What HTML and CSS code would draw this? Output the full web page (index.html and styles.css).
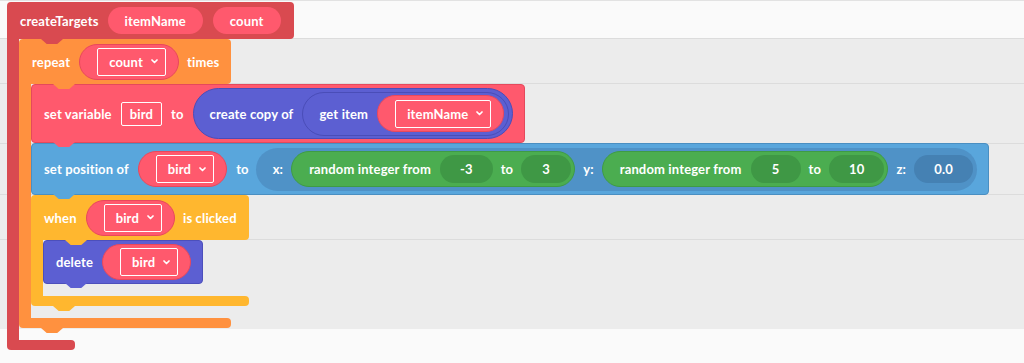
FILE: index.html
```html
<!DOCTYPE html>
<html lang="en">
<head>
<meta charset="utf-8" />
<meta name="viewport" content="width=device-width,initial-scale=1" />
<title>createTargets</title>
<link rel="stylesheet" href="styles.css">
</head>
<body>
<div class="workspace">

  <!-- function definition -->
  <div class="block c-block fn">
    <div class="c-head">
      <span class="label">createTargets</span>
      <span class="param">itemName</span>
      <span class="param">count</span>
    </div>
    <div class="c-mouth">
      <div class="c-arm"></div>
      <div class="c-stack">

        <!-- repeat -->
        <div class="block c-block repeat">
          <div class="c-head">
            <span class="label">repeat</span>
            <span class="dropdown"><span class="field">count<svg class="chev" width="7" height="5" viewBox="0 0 7 5"><path d="M1 1l2.5 2.5L6 1"/></svg></span></span>
            <span class="label">times</span>
          </div>
          <div class="c-mouth">
            <div class="c-arm"></div>
            <div class="c-stack">

              <div class="block stmt set-var">
                <span class="label">set variable</span>
                <span class="var-field">bird</span>
                <span class="label">to</span>
                <span class="reporter copy">
                  <span class="label">create copy of</span>
                  <span class="reporter get-item">
                    <span class="label">get item</span>
                    <span class="dropdown"><span class="field">itemName<svg class="chev" width="7" height="5" viewBox="0 0 7 5"><path d="M1 1l2.5 2.5L6 1"/></svg></span></span>
                  </span>
                </span>
              </div>

              <div class="block stmt set-pos">
                <span class="label">set position of</span>
                <span class="dropdown"><span class="field">bird<svg class="chev" width="7" height="5" viewBox="0 0 7 5"><path d="M1 1l2.5 2.5L6 1"/></svg></span></span>
                <span class="label">to</span>
                <span class="reporter vec">
                  <span class="label">x:</span>
                  <span class="reporter rand">
                    <span class="label">random integer from</span>
                    <span class="num">-3</span>
                    <span class="label">to</span>
                    <span class="num">3</span>
                  </span>
                  <span class="label">y:</span>
                  <span class="reporter rand">
                    <span class="label">random integer from</span>
                    <span class="num">5</span>
                    <span class="label">to</span>
                    <span class="num">10</span>
                  </span>
                  <span class="label">z:</span>
                  <span class="num num-blue">0.0</span>
                </span>
              </div>

              <!-- when clicked -->
              <div class="block c-block when">
                <div class="c-head">
                  <span class="label">when</span>
                  <span class="dropdown"><span class="field">bird<svg class="chev" width="7" height="5" viewBox="0 0 7 5"><path d="M1 1l2.5 2.5L6 1"/></svg></span></span>
                  <span class="label">is clicked</span>
                </div>
                <div class="c-mouth">
                  <div class="c-arm"></div>
                  <div class="c-stack">
                    <div class="block stmt delete">
                      <span class="label">delete</span>
                      <span class="dropdown"><span class="field">bird<svg class="chev" width="7" height="5" viewBox="0 0 7 5"><path d="M1 1l2.5 2.5L6 1"/></svg></span></span>
                    </div>
                  </div>
                </div>
                <div class="c-foot"></div>
              </div>

            </div>
          </div>
          <div class="c-foot"></div>
        </div>

      </div>
    </div>
    <div class="c-foot"></div>
  </div>

</div>
</body>
</html>
```

FILE: styles.css
```css
body{margin:0;font-family:Lato,"Noto Sans",sans-serif;font-weight:700;font-size:13px;letter-spacing:.15px;color:#fff;}
.workspace{
  height:363px;box-sizing:border-box;padding:2px 0 0 7px;overflow:hidden;
  background:linear-gradient(to bottom,
    #e2e2e2 0 1px,#fafafa 1px 38px,
    #dcdcdc 38px 39px,#ececec 39px 83px,
    #dcdcdc 83px 84px,#ececec 84px 143px,
    #dcdcdc 143px 144px,#ececec 144px 194px,
    #dcdcdc 194px 195px,#ececec 195px 239px,
    #dcdcdc 239px 240px,#ececec 240px 329px,
    #fafafa 329px);
}

/* block colours */
.fn{--c:#d94a50;--b:#c23d43;}
.repeat{--c:#ff913f;--b:#e57b2e;}
.set-var{--c:#ff596d;--b:#e5495c;}
.set-pos{--c:#59a6dc;--b:#4a8fc2;}
.when{--c:#ffb72f;--b:#e8a21f;}
.delete{--c:#5c5fd2;--b:#4c4fbb;}

.block{position:relative;}
.label{white-space:nowrap;}

/* C shaped blocks */
.c-block{display:inline-flex;flex-direction:column;}
.c-head{display:flex;align-items:center;gap:9px;box-sizing:border-box;padding:0 12px 0 13px;background:var(--c);border-radius:4px 4px 4px 0;position:relative;}
.c-head .dropdown + .label{margin-left:-1px;}
.c-mouth{display:flex;width:0;min-width:100%;}
.c-arm{flex:none;width:12px;background:var(--c);}
.c-stack{display:flex;flex-direction:column;align-items:flex-start;padding-bottom:12px;}
.c-foot{height:10px;background:var(--c);border-radius:0 4px 4px 4px;position:relative;}

.fn > .c-head{height:37px;padding-right:13px;}
.fn > .c-head .param + .param{margin-left:1px;}
.fn > .c-foot{width:68px;}
.fn > .c-foot::after{display:none;}
.repeat > .c-head,.when > .c-head{height:45px;}

/* straight blocks */
.stmt{display:flex;align-items:center;gap:9px;box-sizing:border-box;padding:0 11px 0 12px;background:var(--c);border:1px solid var(--b);border-radius:4px;}
.set-var{height:59px;}
.set-pos{height:52px;}
.delete{height:44px;}

/* connection tabs */
.stmt::after,.c-foot::after,.c-head::after{
  content:"";position:absolute;top:100%;left:22px;width:22px;height:5px;z-index:1;
  background:var(--c);clip-path:polygon(0 0,100% 0,74% 100%,26% 100%);
}
.stmt::after{left:21px;}
.c-head::after{left:34px;}

/* inputs */
.param{display:flex;align-items:center;height:27px;padding:0 17px;border-radius:14px;background:#ff596d;}
.dropdown{display:flex;align-items:center;box-sizing:border-box;height:36px;padding:0 12px 0 17px;border-radius:18px;background:#ff596d;border:1px solid #e8485c;}
.field{display:flex;align-items:center;gap:8px;box-sizing:border-box;height:28px;padding:0 7px 0 11px;border:1px solid #fff;border-radius:2px;}
.chev{fill:none;stroke:#fff;stroke-width:1.7;stroke-linecap:round;stroke-linejoin:round;}
.var-field{display:flex;align-items:center;box-sizing:border-box;height:24px;padding:0 8px;border:1px solid #fff;border-radius:2px;}

.reporter{display:flex;align-items:center;box-sizing:border-box;white-space:nowrap;}
.copy{height:51px;gap:9px;padding:0 3px 0 16px;border-radius:26px;background:#5c5fd2;border:1px solid #4a4db8;}
.get-item{height:44px;gap:9px;padding:0 4px 0 16px;border-radius:22px;background:#5c5fd2;border:1px solid #4a4db8;}
.get-item .dropdown{height:37px;}
.set-pos > .label + .vec{margin-left:-2px;}
.vec{height:43px;gap:8px;padding:0 4px 0 17px;border-radius:22px;background:#4f92c7;}
.rand{height:36px;gap:8px;padding:0 3px 0 17px;border-radius:18px;background:#4bad50;border:1px solid #3f9b45;}
.rand .label:first-child{margin-right:1px;}
.num{display:flex;align-items:center;justify-content:center;box-sizing:border-box;height:28px;min-width:50px;padding:0 20px;border-radius:14px;background:#3f9845;}
.num-blue{background:#4581b3;min-width:59px;}
```
